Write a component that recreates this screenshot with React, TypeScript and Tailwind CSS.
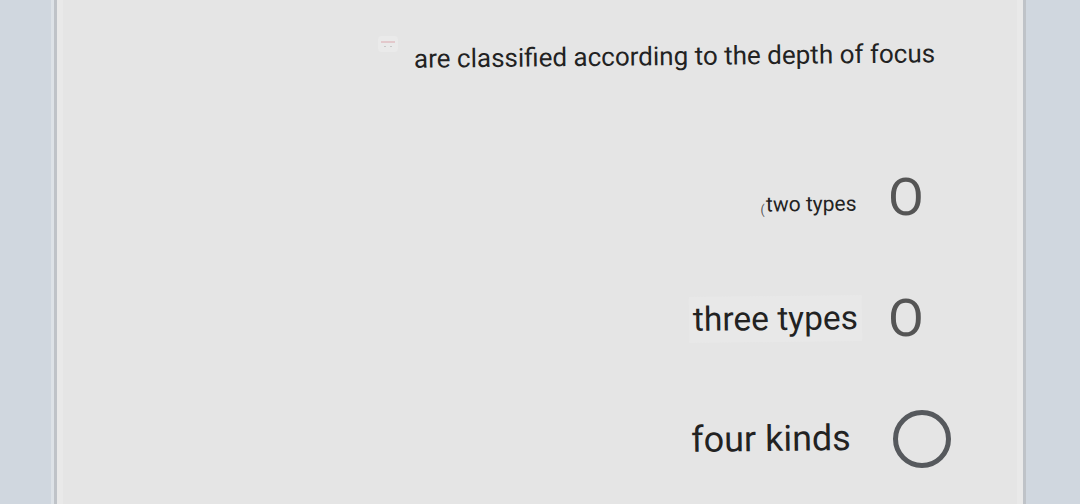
export default function App() {
  return (
    <div className="h-[504px] w-[1080px] overflow-hidden bg-[#d0d7df] font-['Roboto',sans-serif]">
      <div className="ml-[51px] flex h-full w-[975px]">
        <div className="w-[3px] bg-[#dde2e7]" />
        <div className="w-[3px] bg-[#bfc3c8]" />
        <div className="flex flex-1 flex-col border-x-[6px] border-[#e9e9e9] bg-[#e5e5e5]">
          {/* question */}
          <div className="flex h-[155px] items-start pl-[315px] pt-[35px]">
            <div className="mt-[1px] flex h-[16px] w-[20px] flex-col items-center justify-center gap-[3px] rounded-sm bg-[#eaeaea]">
              <div className="h-[2px] w-[14px] bg-[#e3c9cc]" />
              <div className="flex gap-[4px]">
                <div className="h-[1px] w-[2px] bg-[#c8c8c8]" />
                <div className="h-[1px] w-[2px] bg-[#c8c8c8]" />
              </div>
            </div>
            <p className="ml-[16px] mt-[6px] -rotate-[0.6deg] text-[26px] leading-[30px] text-[#222]">
              are classified according to the depth of focus
            </p>
          </div>

          {/* options */}
          <div className="flex flex-col items-end pr-[67px]">
            <div className="flex h-[86px] items-center">
              <span className="mr-[1px] mt-[24px] text-[12px] leading-none text-[#555]">(</span>
              <span className="mt-[12px] -rotate-[0.6deg] text-[21px] leading-none text-[#222]">two types</span>
              <div className="ml-[32px] w-[62px] text-[52px] leading-none text-[#555]">O</div>
            </div>
            <div className="mt-[35px] flex h-[86px] items-center">
              <span className="-rotate-[0.6deg] bg-[#e8e8e8] px-[4px] py-[6px] text-[33.5px] leading-none text-[#222]">
                three types
              </span>
              <div className="ml-[26px] w-[62px] text-[52px] leading-none text-[#555]">O</div>
            </div>
            <div className="mt-[34px] flex h-[86px] items-center">
              <span className="-rotate-[0.6deg] text-[36px] leading-none text-[#222]">four kinds</span>
              <div className="ml-[42px] flex w-[57px]">
                <div className="h-[58px] w-[58px] shrink-0 rounded-full border-[5px] border-[#56595d]" />
              </div>
            </div>
          </div>
        </div>
        <div className="w-[3px] bg-[#bfc3c8]" />
      </div>
    </div>
  );
}
